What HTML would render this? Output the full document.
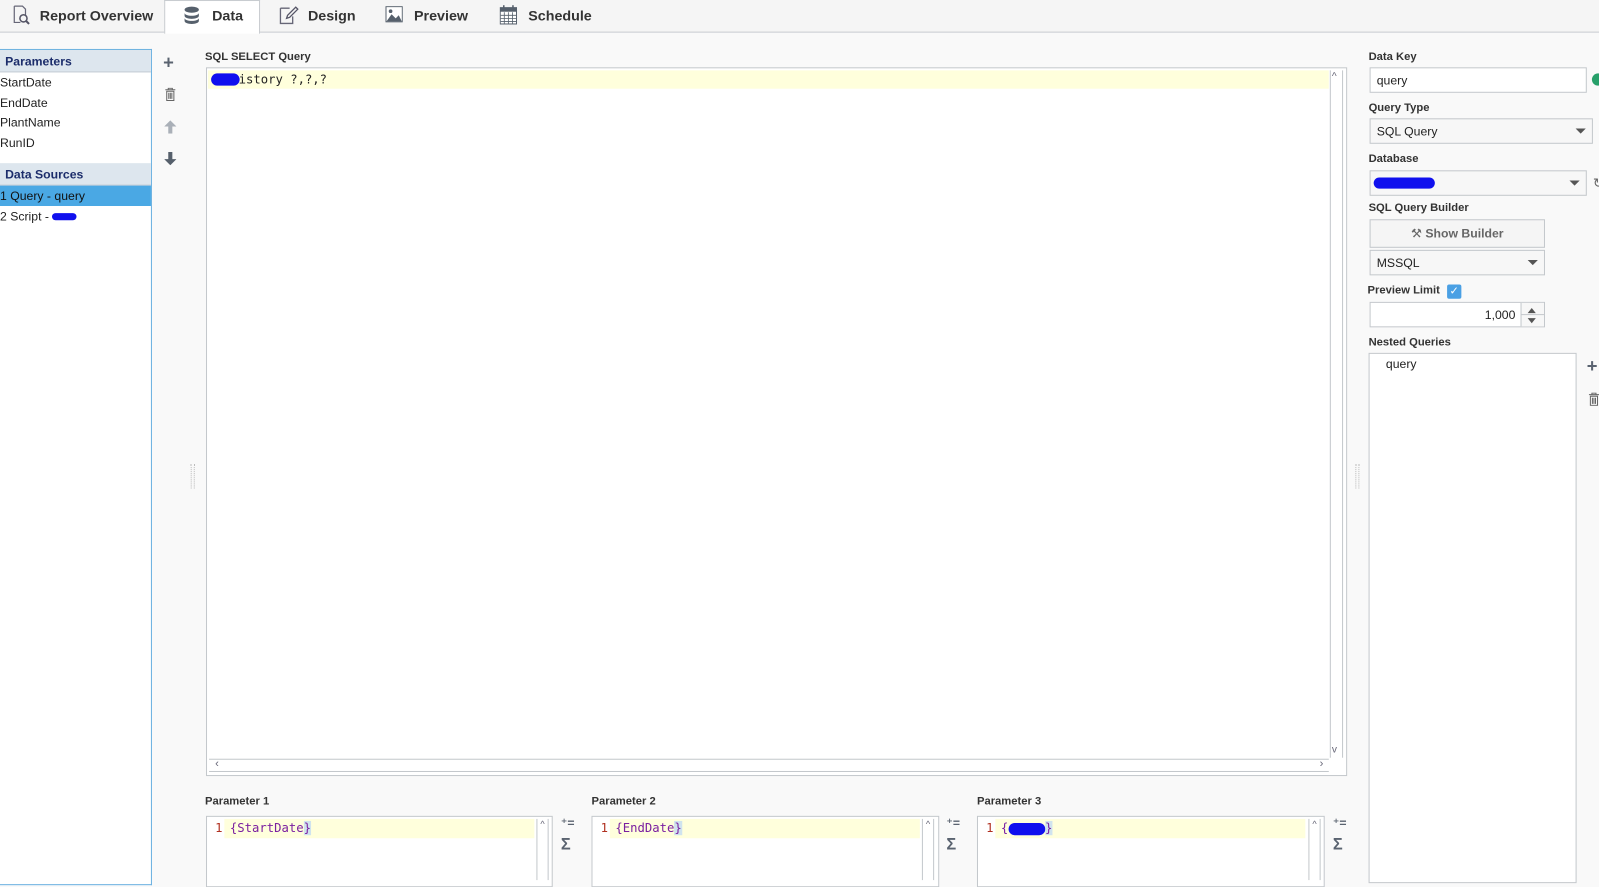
<!DOCTYPE html>
<html><head><meta charset="utf-8"><style>
*{box-sizing:border-box;margin:0;padding:0}
html,body{width:1599px;height:858px;overflow:hidden;background:#f9f9f9}
#w{position:absolute;left:0;top:0;width:1568px;height:842px;transform:scale(1.0198);transform-origin:0 0;font-family:"Liberation Sans","DejaVu Sans",sans-serif;font-size:12px;color:#222}
.a{position:absolute}
.tabs{left:0;top:0;width:1568px;height:32px;background:#f5f5f5;border-bottom:1px solid #c8ccd0}
.tab{top:0;height:31px;line-height:30px;font-size:14px;font-weight:bold;color:#333}
.lbl{font-size:11px;font-weight:bold;color:#333}
.box{background:#fff;border:1px solid #c4c8cc}
.mono{font-family:"DejaVu Sans Mono","Liberation Mono",monospace;font-size:12px}
.li{left:0;font-size:12px;height:20px;line-height:20px;width:148px}
.hd{left:0;width:148px;height:22px;line-height:22px;background:#dde6ee;color:#1c2d6b;font-weight:bold;padding-left:5px;border-bottom:1px solid #c4ccd4}
.ic{color:#5a6370;font-size:14px;font-weight:bold}
</style></head><body><div id="w">
<div class="a tabs"></div>
<div class="a" style="left:161px;top:0;width:94px;height:33px;background:#fff;border:1px solid #c8ccd0;border-bottom:none"></div>
<svg class="a" style="left:12px;top:5px" width="18" height="20" viewBox="0 0 18 20"><path d="M2 1h8l3 3v6M2 1v16h6" fill="none" stroke="#667" stroke-width="1.2"/><circle cx="11" cy="13" r="3.5" fill="none" stroke="#556" stroke-width="1.5"/><path d="M13.5 15.5l3 3" stroke="#556" stroke-width="2"/></svg>
<div class="a tab" style="left:39px">Report Overview</div>
<svg class="a" style="left:180px;top:6px" width="16" height="18" viewBox="0 0 16 18"><ellipse cx="8" cy="3.5" rx="7" ry="3" fill="#56606c"/><path d="M1 6.5c0 4 14 4 14 0v3c0 4-14 4-14 0zM1 11.5c0 4 14 4 14 0v3c0 4-14 4-14 0z" fill="#56606c"/></svg>
<div class="a tab" style="left:208px">Data</div>
<svg class="a" style="left:273px;top:5px" width="20" height="20" viewBox="0 0 20 20"><path d="M2 3h9M2 3v15h12v-7" fill="none" stroke="#667" stroke-width="1.3"/><path d="M8 13l1-3 8-8 2 2-8 8z" fill="none" stroke="#556" stroke-width="1.3"/></svg>
<div class="a tab" style="left:302px">Design</div>
<svg class="a" style="left:378px;top:6px" width="17" height="16" viewBox="0 0 17 16"><rect x="0.5" y="0.5" width="16" height="15" fill="#fff" stroke="#56606c"/><path d="M1 15l5-7 4 4 3-3 3 6z" fill="#56606c"/><circle cx="5" cy="5" r="1.8" fill="#56606c"/></svg>
<div class="a tab" style="left:406px">Preview</div>
<svg class="a" style="left:490px;top:5px" width="17" height="19" viewBox="0 0 17 19"><rect x="0.5" y="2.5" width="16" height="16" fill="#fff" stroke="#56606c"/><rect x="0.5" y="2.5" width="16" height="4" fill="#56606c"/><path d="M4 0v4M13 0v4" stroke="#56606c" stroke-width="1.5"/><path d="M1 10h15M1 13h15M1 16h15M4.5 7v11M8.5 7v11M12.5 7v11" stroke="#56606c" stroke-width="0.8"/></svg>
<div class="a tab" style="left:518px">Schedule</div>

<div class="a" style="left:0;top:48px;width:149px;height:820px;background:#fff;border:1px solid #6ab0e0;border-left:none"></div>
<div class="a hd" style="top:49px">Parameters</div>
<div class="a li" style="top:71px">StartDate</div>
<div class="a li" style="top:91px">EndDate</div>
<div class="a li" style="top:110px">PlantName</div>
<div class="a li" style="top:130px">RunID</div>
<div class="a hd" style="top:160px">Data Sources</div>
<div class="a li" style="top:182px;background:#4aa8e4;color:#111">1 Query - query</div>
<div class="a li" style="top:202px">2 Script - <span style="display:inline-block;width:24px;height:7px;border-radius:4px;background:#1010ee;vertical-align:middle"></span></div>

<div class="a ic" style="left:160px;top:51px;font-size:18px">+</div>
<svg class="a" style="left:162px;top:86px" width="10" height="13" viewBox="0 0 10 13"><path d="M0 2h10M3 2V0.5h4V2M1.5 3.5h7v9h-7zM3.5 5v6M5 5v6M6.5 5v6" fill="none" stroke="#666" stroke-width="1"/></svg>
<svg class="a" style="left:161px;top:118px" width="12" height="13"><path d="M6 0l6 6H8v7H4V6H0z" fill="#aab0b8"/></svg>
<svg class="a" style="left:161px;top:149px" width="12" height="13"><path d="M6 13l6-6H8V0H4v7H0z" fill="#56606c"/></svg>

<div class="a" style="left:187px;top:455px;width:4px;height:24px;border-left:1px dotted #bbb;border-right:1px dotted #bbb"></div>
<div class="a" style="left:1329px;top:455px;width:4px;height:24px;border-left:1px dotted #bbb;border-right:1px dotted #bbb"></div>

<div class="a lbl" style="left:201px;top:50px">SQL SELECT Query</div>
<div class="a box" style="left:202px;top:66px;width:1119px;height:695px"></div>
<div class="a" style="left:204px;top:69px;width:1099px;height:18px;background:#ffffdc"></div>
<div class="a" style="left:207px;top:72px;width:28px;height:12px;border-radius:6px;background:#1010ee"></div>
<div class="a mono" style="left:234px;top:71px">istory ?,?,?</div>
<div class="a" style="left:1304px;top:69px;width:13px;height:674px;border-left:1px solid #c4c8cc;border-right:1px solid #c4c8cc;background:#fff"></div>
<div class="a" style="left:1306px;top:70px;font-size:10px;color:#667">^</div>
<div class="a" style="left:1306px;top:730px;font-size:10px;color:#667">v</div>
<div class="a" style="left:205px;top:744px;width:1098px;height:13px;border-top:1px solid #c4c8cc;border-bottom:1px solid #c4c8cc;background:#fff"></div>
<div class="a" style="left:211px;top:743px;font-size:11px;color:#667">‹</div>
<div class="a" style="left:1294px;top:743px;font-size:11px;color:#667">›</div>

<div class="a lbl" style="left:201px;top:780px">Parameter 1</div>
<div class="a lbl" style="left:580px;top:780px">Parameter 2</div>
<div class="a lbl" style="left:958px;top:780px">Parameter 3</div>
<div class="a box" style="left:202px;top:800px;width:340px;height:70px"></div>
<div class="a box" style="left:580px;top:800px;width:341px;height:70px"></div>
<div class="a box" style="left:958px;top:800px;width:341px;height:70px"></div>
<div class="a" style="left:220px;top:803px;width:304px;height:19px;background:#ffffdc"></div>
<div class="a" style="left:598px;top:803px;width:304px;height:19px;background:#ffffdc"></div>
<div class="a" style="left:976px;top:803px;width:304px;height:19px;background:#ffffdc"></div>
<div class="a mono" style="left:211px;top:805px;color:#222"><span style="color:#b03020">1</span> <span style="color:#7a1fa0">{StartDate<span style="background:#cfe3ee">}</span></span></div>
<div class="a mono" style="left:589px;top:805px"><span style="color:#b03020">1</span> <span style="color:#7a1fa0">{EndDate<span style="background:#cfe3ee">}</span></span></div>
<div class="a mono" style="left:967px;top:805px"><span style="color:#b03020">1</span> <span style="color:#7a1fa0">{<span style="display:inline-block;width:36px;height:12px;border-radius:6px;background:#1010ee;vertical-align:middle"></span><span style="background:#cfe3ee">}</span></span></div>
<div class="a" style="left:526px;top:803px;width:12px;height:60px;border-left:1px solid #c4c8cc;border-right:1px solid #c4c8cc;font-size:9px;color:#667;text-align:center">^</div>
<div class="a" style="left:904px;top:803px;width:12px;height:60px;border-left:1px solid #c4c8cc;border-right:1px solid #c4c8cc;font-size:9px;color:#667;text-align:center">^</div>
<div class="a" style="left:1283px;top:803px;width:12px;height:60px;border-left:1px solid #c4c8cc;border-right:1px solid #c4c8cc;font-size:9px;color:#667;text-align:center">^</div>
<div class="a ic" style="left:550px;top:800px;font-size:12px">⁺=</div>
<div class="a ic" style="left:550px;top:820px;font-size:16px">Σ</div>
<div class="a ic" style="left:928px;top:800px;font-size:12px">⁺=</div>
<div class="a ic" style="left:928px;top:820px;font-size:16px">Σ</div>
<div class="a ic" style="left:1307px;top:800px;font-size:12px">⁺=</div>
<div class="a ic" style="left:1307px;top:820px;font-size:16px">Σ</div>

<div class="a lbl" style="left:1342px;top:50px">Data Key</div>
<div class="a box" style="left:1343px;top:66px;width:213px;height:25px;padding:5px 6px;font-size:12px">query</div>
<div class="a" style="left:1561px;top:72px;width:12px;height:12px;border-radius:6px;background:#27a06a"></div>
<div class="a lbl" style="left:1342px;top:100px">Query Type</div>
<div class="a box" style="left:1343px;top:116px;width:219px;height:25px;padding:5px 6px;background:#f7f7f7">SQL Query</div>
<div class="a" style="left:1545px;top:126px;border:5px solid transparent;border-top:5px solid #555"></div>
<div class="a lbl" style="left:1342px;top:150px">Database</div>
<div class="a box" style="left:1343px;top:167px;width:213px;height:25px;background:#f7f7f7"></div>
<div class="a" style="left:1347px;top:174px;width:60px;height:11px;border-radius:6px;background:#1010ee"></div>
<div class="a" style="left:1539px;top:177px;border:5px solid transparent;border-top:5px solid #555"></div>
<div class="a" style="left:1562px;top:172px;font-size:13px;color:#666">↻</div>
<div class="a lbl" style="left:1342px;top:198px">SQL Query Builder</div>
<div class="a box" style="left:1343px;top:215px;width:172px;height:28px;background:#f5f5f5;text-align:center;line-height:26px;font-weight:bold;color:#666">⚒ Show Builder</div>
<div class="a box" style="left:1343px;top:245px;width:172px;height:25px;padding:5px 6px;background:#f7f7f7">MSSQL</div>
<div class="a" style="left:1498px;top:255px;border:5px solid transparent;border-top:5px solid #555"></div>
<div class="a lbl" style="left:1341px;top:279px">Preview Limit</div>
<div class="a" style="left:1419px;top:279px;width:14px;height:14px;background:#4aa0e4;border-radius:2px;color:#fff;font-size:11px;line-height:14px;text-align:center">✓</div>
<div class="a box" style="left:1343px;top:296px;width:172px;height:25px;text-align:right;padding:5px 28px 0 0">1,000</div>
<div class="a" style="left:1491px;top:297px;width:23px;height:23px;border-left:1px solid #c4c8cc;background:#f7f7f7"></div>
<div class="a" style="left:1498px;top:298px;border:4px solid transparent;border-bottom:5px solid #555"></div>
<div class="a" style="left:1491px;top:308px;width:23px;border-top:1px solid #c4c8cc"></div>
<div class="a" style="left:1498px;top:312px;border:4px solid transparent;border-top:5px solid #555"></div>
<div class="a lbl" style="left:1342px;top:330px">Nested Queries</div>
<div class="a box" style="left:1342px;top:346px;width:204px;height:520px;padding:3px 16px">query</div>
<div class="a ic" style="left:1556px;top:349px;font-size:18px">+</div>
<svg class="a" style="left:1558px;top:385px" width="10" height="13" viewBox="0 0 10 13"><path d="M0 2h10M3 2V0.5h4V2M1.5 3.5h7v9h-7zM3.5 5v6M5 5v6M6.5 5v6" fill="none" stroke="#666" stroke-width="1"/></svg>
</div></body></html>
